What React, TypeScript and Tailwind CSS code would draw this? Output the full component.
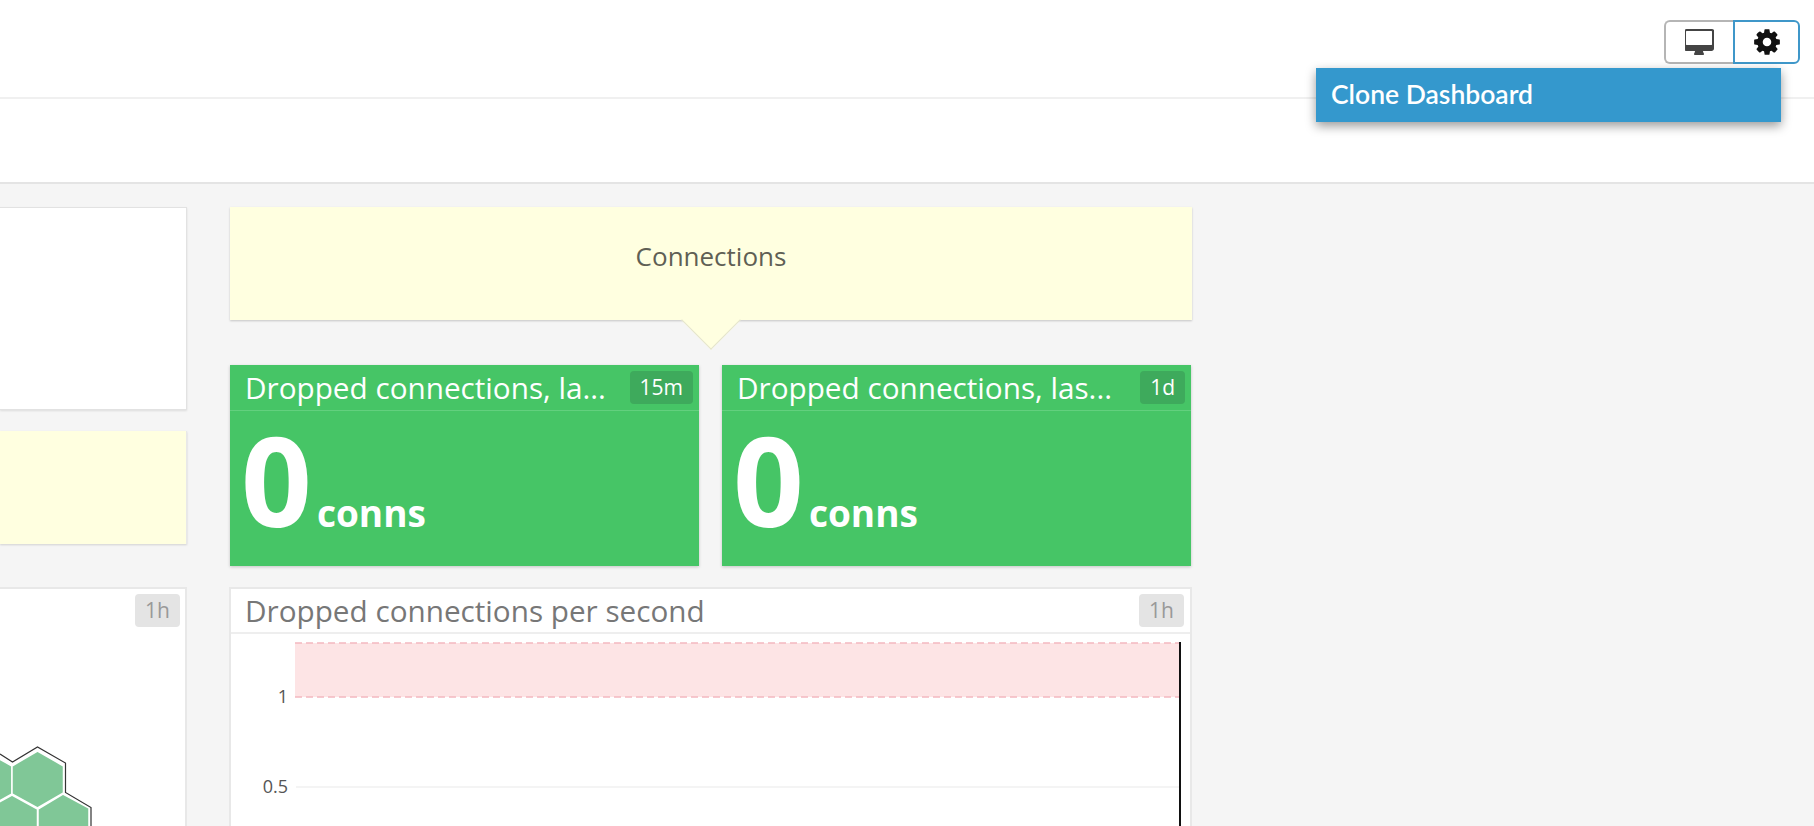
const font = { fontFamily: '"Open Sans", "Noto Sans", sans-serif' }

function Badge({ label, green }: { label: string; green?: boolean }) {
    return (
        <span className={`flex h-[33px] items-center justify-center rounded-[4px] px-[10px] text-[21px] ${green ? 'bg-[#3eaa5c] text-white' : 'bg-[#e4e4e4] text-[#999999]'}`}>
            {label}
        </span>
    )
}

function QueryValue({ title, badge }: { title: string; badge: string }) {
    return (
        <div className="flex h-[201px] w-[469px] flex-col bg-[#46c566] text-white shadow-[0_1px_3px_rgba(0,0,0,0.2)]">
            <div className="flex h-[46px] shrink-0 items-center justify-between border-b border-[#62d07e] pl-[15px] pr-[6px]">
                <span className="text-[29.7px] leading-none">{title}</span>
                <Badge label={badge} green />
            </div>
            <div className="flex items-baseline pl-[11px] pt-[2px]">
                <span className="text-[124px] font-bold leading-[132px]">0</span>
                <span className="ml-[5px] text-[37px] font-bold leading-none">conns</span>
            </div>
        </div>
    )
}

function Hexagons() {
    return (
        <svg className="absolute left-0 top-0" width="186" height="237" viewBox="0 589 186 237">
            <g fill="#80c797" stroke="#ffffff" strokeWidth="1.5">
                <path d="M-13 752 L12 766 L12 794 L-13 808 L-38 794 L-38 766 Z" />
                <path d="M37.5 751 L63.5 766 L63.5 793 L37.5 808 L12 794 L12 766 Z" />
                <path d="M12 795 L37.5 809 L37.5 840 L12 850 L-13 840 L-13 809 Z" />
                <path d="M63 794 L89 808 L89 840 L63 850 L38 840 L38 809 Z" />
            </g>
            <path d="M0 754 L12.5 762 L37.5 747 L65.5 763 L65.5 792.5 L91 807.5 L91 830" fill="none" stroke="#333333" strokeWidth="1.2" />
        </svg>
    )
}

function LeftColumn() {
    return (
        <div className="flex w-[187px] shrink-0 flex-col">
            <div className="h-[203px] shrink-0 border-r border-b border-t border-[#e2e2e2] bg-white shadow-[0_1px_2px_rgba(0,0,0,0.1)]" />
            <div className="mt-[21px] h-[113px] shrink-0 border-r border-[#e8e8e8] bg-[#ffffe0] shadow-[0_1px_2px_rgba(0,0,0,0.15)]" />
            <div className="relative mt-[43px] h-[260px] shrink-0 overflow-hidden border-r-2 border-t-2 border-[#e8e8e8] bg-white">
                <div className="flex justify-end pr-[5px] pt-[5px]">
                    <Badge label="1h" />
                </div>
                <Hexagons />
            </div>
        </div>
    )
}

function Chart() {
    return (
        <svg width="958" height="200" viewBox="0 0 958 200">
            <rect x="64" y="9" width="885" height="54" fill="#fde4e5" />
            <line x1="64" y1="9" x2="949" y2="9" stroke="#f4b8c0" strokeWidth="1.3" strokeDasharray="7 4" />
            <line x1="64" y1="63" x2="949" y2="63" stroke="#f4b8c0" strokeWidth="1.3" strokeDasharray="7 4" />
            <line x1="65" y1="153" x2="949" y2="153" stroke="#e9e9e9" />
            <line x1="949" y1="8" x2="949" y2="200" stroke="#111111" strokeWidth="2" />
            <text x="57" y="69" textAnchor="end" fontSize="18" fill="#555555">1</text>
            <text x="57" y="159" textAnchor="end" fontSize="18" fill="#555555">0.5</text>
        </svg>
    )
}

export default function App() {
    return (
        <div className="relative flex h-[826px] w-full flex-col overflow-hidden bg-[#f5f5f5]" style={font}>
            <header className="flex h-[99px] shrink-0 justify-end border-b-2 border-[#f0f0f0] bg-white pr-[14px] pt-[20px]">
                <div className="flex h-[44px]">
                    <button className="flex w-[69px] items-center justify-center rounded-l-[6px] border-2 border-r-0 border-[#b5b5b5] bg-white">
                        <svg width="29" height="26" viewBox="0 0 1856 1664" fill="#444444">
                            <path d="M1728 992v-832q0-13-9.5-22.5t-22.5-9.5h-1600q-13 0-22.5 9.5t-9.5 22.5v832q0 13 9.5 22.5t22.5 9.5h1600q13 0 22.5-9.5t9.5-22.5zm128-832v1088q0 66-47 113t-113 47h-544q0 37 16 77.5t32 71 16 43.5q0 26-19 45t-45 19h-512q-26 0-45-19t-19-45q0-14 16-44t32-70 16-78h-544q-66 0-113-47t-47-113v-1088q0-66 47-113t113-47h1632q66 0 113 47t47 113z" />
                        </svg>
                    </button>
                    <button className="flex w-[67px] items-center justify-center rounded-r-[6px] border-2 border-[#3f97c9] bg-white">
                        <svg width="30" height="30" viewBox="0 0 1792 1792" fill="#111111">
                            <path d="M1152 896q0-106-75-181t-181-75-181 75-75 181 75 181 181 75 181-75 75-181zm512-109v222q0 12-8 23t-20 13l-185 28q-19 54-39 91 35 50 107 138 10 12 10 25t-9 23q-27 37-99 108t-94 71q-12 0-26-9l-138-108q-44 23-91 38-16 136-29 186-7 28-36 28h-222q-14 0-24.5-8.5t-11.5-21.5l-28-184q-49-16-90-37l-141 107q-10 9-25 9-14 0-25-11-126-114-165-168-7-10-7-23 0-12 8-23 15-21 51-66.5t54-70.5q-27-50-41-99l-183-27q-13-2-21-12.5t-8-23.5v-222q0-12 8-23t19-13l186-28q14-46 39-92-40-57-107-138-10-12-10-24 0-10 9-23 26-36 98.5-107.5t94.5-71.5q13 0 26 10l138 107q44-23 91-38 16-136 29-186 7-28 36-28h222q14 0 24.5 8.5t11.5 21.5l28 184q49 16 90 37l142-107q9-9 24-9 13 0 25 10 129 119 165 170 7 8 7 22 0 12-8 23-15 21-51 66.5t-54 70.5q26 50 41 98l183 28q13 2 21 12.5t8 23.5z" />
                        </svg>
                    </button>
                </div>
            </header>
            <div className="h-[85px] shrink-0 border-b-2 border-[#e4e4e4] bg-white" />
            <main className="flex shrink-0 gap-[43px] pt-[23px]">
                <LeftColumn />
                <div className="flex w-[962px] shrink-0 flex-col">
                    <div className="relative flex h-[113px] shrink-0 items-center justify-center bg-[#ffffe0] pb-[14px] text-[26px] text-[#5f5f55] shadow-[0_1px_2px_rgba(0,0,0,0.2)]">
                        Connections
                        <div className="absolute bottom-[-21px] left-[460px] h-[42px] w-[42px] rotate-45 border-b border-r border-[#e4e4cc] bg-[#ffffe0]" />
                    </div>
                    <div className="mt-[45px] flex justify-between pr-[1px]">
                        <QueryValue title="Dropped connections, la..." badge="15m" />
                        <QueryValue title="Dropped connections, las..." badge="1d" />
                    </div>
                    <div className="mt-[21px] ml-[-1px] h-[260px] shrink-0 border-x-2 border-t-2 border-[#e8e8e8] bg-white">
                        <div className="flex h-[45px] items-center justify-between border-b-2 border-[#eeeeee] pl-[14px] pr-[6px]">
                            <span className="text-[29.7px] leading-none text-[#777777]">Dropped connections per second</span>
                            <Badge label="1h" />
                        </div>
                        <Chart />
                    </div>
                </div>
            </main>
            <div className="absolute left-[1316px] top-[68px] flex h-[54px] w-[465px] items-center bg-[#3498cd] pl-[15px] text-[26.5px] font-semibold text-white shadow-[0_4px_10px_rgba(0,0,0,0.4)]" style={{ fontFamily: 'Lato, sans-serif' }}>
                Clone Dashboard
            </div>
        </div>
    )
}
